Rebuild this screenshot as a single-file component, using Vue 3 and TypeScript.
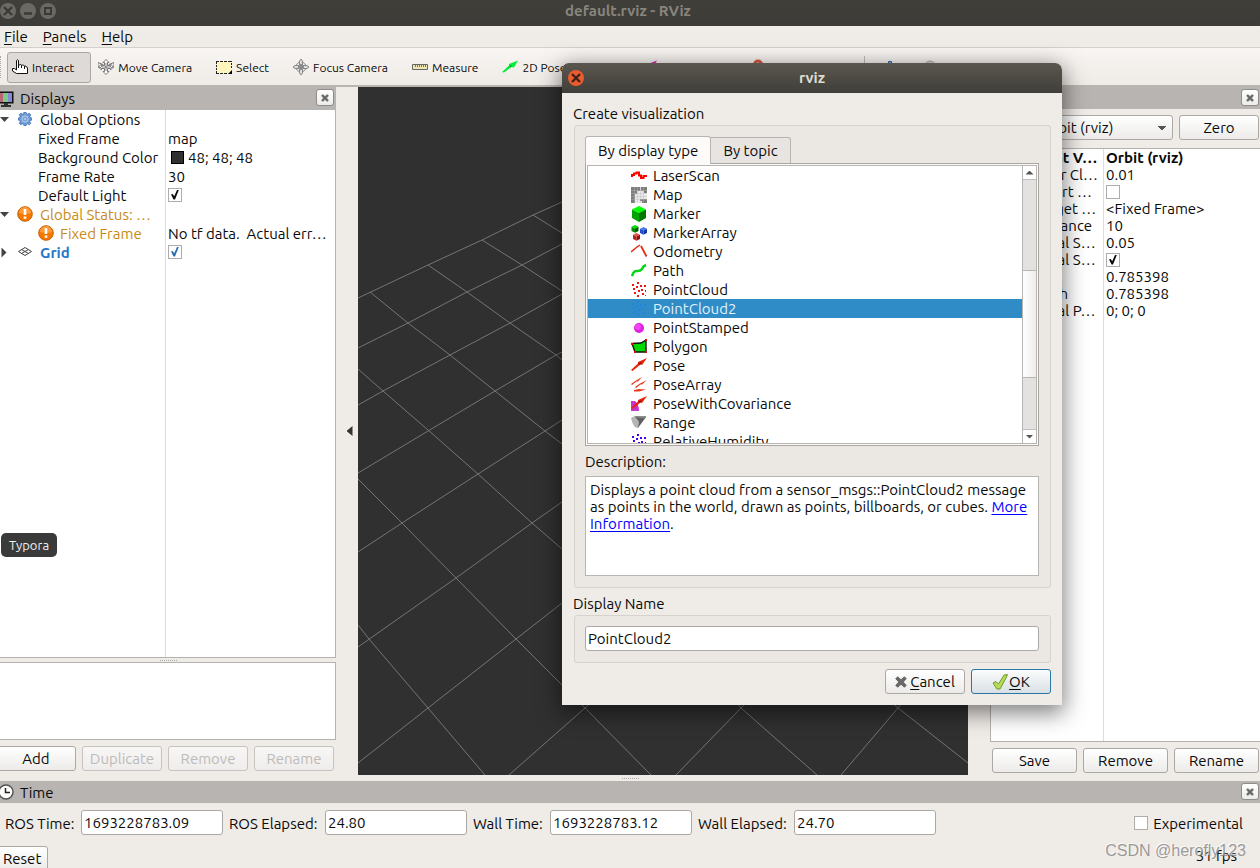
<script setup lang="ts">
import { h, ref } from 'vue'

interface Shape {
  d: string
  fill?: string
  stroke?: string
  w?: number
}

const dots = (color: string): Shape[] => [
  {
    d: 'M6 0h2v2h-2zM1 2h2v2h-2zM9 3h2v2h-2zM13 3h2v2h-2zM5 4h2v2h-2zM2 6h2v2h-2zM10 7h2v2h-2zM7 8h2v2h-2zM14 8h1v2h-1zM3 10h2v2h-2zM11 11h2v2h-2zM6 13h2v2h-2zM14 13h1v1h-1z',
    fill: color,
  },
]

const cube = (x: number, y: number, s: number, top: string, left: string, right: string): Shape[] => [
  { d: `M${x} ${y}l${s} ${s / 2}l${-s} ${s / 2}l${-s} ${-s / 2}z`, fill: top },
  { d: `M${x - s} ${y + s / 2}l${s} ${s / 2}v${s * 1.2}l${-s} ${-s / 2}z`, fill: left },
  { d: `M${x + s} ${y + s / 2}l${-s} ${s / 2}v${s * 1.2}l${s} ${-s / 2}z`, fill: right },
]

const arrow = (body: string, mid: string): Shape[] => [
  { d: 'M0 12L7 5.500L7 4L16 0L11 7L9.500 6.500L1.500 13z', fill: body },
  { d: 'M7 5.500L11 4L9 7z', fill: mid },
]

const icons: Record<string, Shape[]> = {
  hand: [
    {
      d: 'M4.500 10V1.500Q5.500 0 6.500 1.500V7Q7.500 5 8.800 5.500T9.500 7Q10.500 5.500 11.700 6.200T12.500 8Q13 6.500 14 7.200T15.500 9V14.500H4.500L.500 12V9.500H2.500L4.500 11z',
      fill: '#fff', stroke: '#111', w: 1,
    },
    { d: 'M6.500 7V9M9.500 7V9M12.500 8V10', stroke: '#111', w: 1 },
  ],
  move: [
    { d: 'M8 .500L11 3.500H9.500V6.500H12.500V5L15.500 8L12.500 11V9.500H9.500V12.500H11L8 15.500L5 12.500H6.500V9.500H3.500V11L.500 8L3.500 5V6.500H6.500V3.500H5z', fill: '#fff', stroke: '#777', w: 1 },
    { d: 'M0 3.500L5 5.500L3 8.500L0 8zM16 3.500L11 5.500L13 8.500L16 8z', fill: 'none', stroke: '#777', w: 1 },
    { d: 'M4 8H12M8 4V12M6 6L10 10M10 6L6 10', stroke: '#888', w: 1 },
  ],
  select: [
    { d: 'M.500 2.500H15.500V14.500H.500z', fill: '#fff6bd' },
    { d: 'M0 2.500H3M4 2.500H7M8 2.500H11M12 2.500H16M.500 3V5M.500 6V8M.500 9V11M.500 12V15M15.500 4V6M15.500 7V9M0 14.500H3M4 14.500H7M8 14.500H11', stroke: '#222', w: 1 },
    { d: 'M16 11V15H12z', fill: '#000' },
  ],
  focus: [
    { d: 'M8 3A5 5 0 1 0 8 13A5 5 0 1 0 8 3zM8 5.500A2.500 2.500 0 1 0 8 10.500A2.500 2.500 0 1 0 8 5.500z', stroke: '#888', w: 1 },
    { d: 'M8 0L9.500 2V6H6.500V2zM8 16L9.500 14V10H6.500V14zM0 8L2 6.500H6V9.500H2zM16 8L14 6.500H10V9.500H14z', fill: '#ddd', stroke: '#888', w: 1 },
    { d: 'M8 5V11M5 8H11', stroke: '#666', w: 1 },
  ],
  ruler: [
    { d: 'M.500 5.500H15.500V10.500H.500z', fill: '#efe5b5', stroke: '#666', w: 1 },
    { d: 'M3.500 6V8M5.500 6V8M7.500 6V8M9.500 6V8M11.500 6V8M13.500 6V8', stroke: '#777', w: 1 },
  ],
  poseGreen: [{ d: 'M0 13L7 6.500L7 5L16 1.500L12 8.500L9.500 8L2 13.500z', fill: '#00f03a' }, { d: 'M7 7L10 6L9 8.500z', fill: '#00a524' }],
  poseMagenta: [{ d: 'M0 13L7 6.500L7 5L16 1.500L12 8.500L9.500 8L2 13.500z', fill: '#e815d0' }],
  pin: [{ d: 'M8 16Q3 9 3 5.500A5 5 0 0 1 13 5.500Q13 9 8 16zM8 3.500A2 2 0 1 0 8 7.500A2 2 0 1 0 8 3.500z', fill: '#d65541' }],
  plus: [{ d: 'M6.500 2.500H9.500V6.500H13.500V9.500H9.500V13.500H6.500V9.500H2.500V6.500H6.500z', fill: '#86a9d6', stroke: '#3465a4', w: 1 }],
  minus: [{ d: 'M8 2A6 6 0 1 0 8 14A6 6 0 1 0 8 2z', fill: '#d0cecc', stroke: '#aaa', w: 1 }],
  monitor: [
    { d: 'M-1 .500H13.500V12.500H-1z', fill: '#111' },
    { d: 'M0 2H3V11H0z', fill: '#b96575' },
    { d: 'M3 2H8V11H3z', fill: '#79cc86' },
    { d: 'M8 2H12V11H8z', fill: '#8b88dc' },
    { d: 'M4 12H8V14H11V16H1V14H4z', fill: '#333' },
  ],
  clock: [
    { d: 'M6 1A7 7 0 1 0 6 15A7 7 0 1 0 6 1z', fill: '#fff', stroke: '#555', w: 1.5 },
    { d: 'M5.500 4V8.500H10', stroke: '#222', w: 1.5 },
  ],
  gear: [
    { d: 'M7 0H9L9.500 2L11 2.500L13 1.500L14.500 3L13.500 5L14 6.500L16 7V9L14 9.500L13.500 11L14.500 13L13 14.500L11 13.500L9.500 14L9 16H7L6.500 14L5 13.500L3 14.500L1.500 13L2.500 11L2 9.500L0 9V7L2 6.500L2.500 5L1.500 3L3 1.500L5 2.500L6.500 2z', fill: '#6f9cd6', stroke: '#3f72b5', w: 1 },
    { d: 'M8 4.500A3.500 3.500 0 1 0 8 11.500A3.500 3.500 0 1 0 8 4.500zM8 7A1 1 0 1 0 8 9A1 1 0 1 0 8 7z', stroke: '#c4d8ef', w: 1 },
  ],
  warn: [
    { d: 'M8 .700A7.300 7.300 0 1 0 8 15.300A7.300 7.300 0 1 0 8 .700z', fill: '#f57900', stroke: '#c66000', w: 1 },
    { d: 'M2 7A6 6 0 0 1 14 7Q8 9 2 7z', fill: '#fb9b3c' },
    { d: 'M6.700 3H9.300V9H6.700zM6.700 10.500H9.300V12.800H6.700z', fill: '#fff' },
  ],
  grid: [
    { d: 'M8 3.500L14.500 7.500L8 11.500L1.500 7.500zM4.500 5.500L11.500 9.500M11.500 5.500L4.500 9.500', stroke: '#444', w: 1 },
  ],
  laser: [{ d: 'M1 9V7H3V5.500H5.500V4.500H8V7.500H10V10H12.500V8H16', stroke: '#f00', w: 2 }],
  map: [
    { d: 'M0 0H16V16H0z', fill: '#e8e8e8' },
    { d: 'M0 0H9V4H6V7H4V16H0zM12 0H16V6H13V4H10V0zM9 12H16V16H11V14H9z', fill: '#7d7d7d' },
    { d: 'M3.500 0V16M6.500 0V16M9.500 0V16M12.500 0V16M0 3.500H16M0 6.500H16M0 9.500H16M0 12.500H16', stroke: '#bbb', w: 0.4 },
  ],
  marker: [
    { d: 'M8 0L15 3.500L8 7L1 3.500z', fill: '#00ff00' },
    { d: 'M1 3.500L8 7V16L1 12z', fill: '#00a400' },
    { d: 'M15 3.500L8 7V16L15 12z', fill: '#007800' },
  ],
  markerArray: [
    ...cube(4, 0, 3.5, '#00e000', '#009000', '#006000'),
    ...cube(12.5, 2, 3.5, '#4a78f0', '#1f4fd0', '#1238a0'),
    ...cube(5.5, 8, 3.5, '#e85050', '#c42020', '#901010'),
  ],
  odometry: [
    { d: 'M0 8L6 3L9 1', stroke: '#e82a10', w: 1.5 },
    { d: 'M10 2L15.500 12.500', stroke: '#e82a10', w: 1.8 },
  ],
  path: [{ d: 'M1 13C4 4 7 11 11 6Q12 3 15 2', stroke: '#00d816', w: 2.5 }],
  cloudRed: dots('#ee1515'),
  cloudBlue: dots('#1f86e0'),
  cloudPurple: dots('#4b00e8'),
  sphere: [
    { d: 'M8 3A5 5 0 1 0 8 13A5 5 0 1 0 8 3z', fill: '#e01fe0' },
    { d: 'M7 4A3 3 0 1 0 7 10A3 3 0 1 0 7 4z', fill: '#f544f5' },
  ],
  polygon: [
    { d: 'M1 4.500L10 4L15 1V13H4z', fill: '#00d800', stroke: '#111', w: 1.4 },
    { d: 'M0 4H2V6H0zM14 0H16V2H14zM14 12H16V14H14zM3 12H5V14H3z', fill: '#f00' },
  ],
  pose: arrow('#e8230c', '#8c1408'),
  poseArray: [
    { d: 'M0 7L5 3.500L11 0L7 4.500L5.500 4.500L1 8zM4 10L9 6.500L16 3L11 7.500L9.500 7.500L5 11zM3 13L8 12L15 12.500L8 14.500L3 14.500z', fill: '#ee3a1c' },
  ],
  poseCov: [{ d: 'M0 5H4Q8 8 8 15H0z', fill: '#c436cc' }, ...arrow('#e8230c', '#8c1408')],
  range: [
    { d: 'M4 2L15 2L7 13z', fill: '#606060' },
    { d: 'M0 3Q4 0 8 7L7 13Q2 13 0 3z', fill: '#b5b5b5' },
    { d: 'M2 1H15V2.500Q8 4 2 1z', fill: '#8b8b8b' },
  ],
  cross: [{ d: 'M3.500 1L8 5L12.500 1L15 3.500L11 8L15 12.500L12.500 15L8 11L3.500 15L1 12.500L5 8L1 3.500z', fill: '#6a6a68', stroke: '#555553', w: 1 }],
  tick: [{ d: 'M1 9L4 7.500L6.500 10L12 1L15.500 .500L14 4L8 15H5z', fill: '#b4dc55', stroke: '#6f9a2c', w: 1 }],
  winClose: [{ d: 'M4 4L12 12M12 4L4 12', stroke: 'currentColor', w: 2.4 }],
  winMin: [{ d: 'M4 10.500H12', stroke: 'currentColor', w: 2.4 }],
  winMax: [{ d: 'M5 5H11V11H5z', stroke: 'currentColor', w: 2 }],
}

const Icon = (props: { name: string; size?: number }) =>
  h(
    'svg',
    { viewBox: '0 0 16 16', width: props.size ?? 16, height: props.size ?? 16, 'aria-hidden': 'true' },
    icons[props.name].map((s) =>
      h('path', { d: s.d, fill: s.fill ?? 'none', stroke: s.stroke, 'stroke-width': s.w, 'fill-rule': 'evenodd' }),
    ),
  )
Icon.props = ['name', 'size']

const tools = [
  { label: 'Interact', icon: 'hand', active: true },
  { label: 'Move Camera', icon: 'move' },
  { label: 'Select', icon: 'select' },
  { label: 'Focus Camera', icon: 'focus' },
  { label: 'Measure', icon: 'ruler' },
  { label: '2D Pose Estimate', icon: 'poseGreen' },
  { label: '2D Nav Goal', icon: 'poseMagenta' },
  { label: 'Publish Point', icon: 'pin' },
]

interface Row {
  name: string
  level: number
  value?: string
  icon?: string
  tone?: string
  open?: boolean
  check?: boolean
  swatch?: boolean
}

const displays = ref<Row[]>([
  { name: 'Global Options', level: 0, icon: 'gear', open: true },
  { name: 'Fixed Frame', level: 1, value: 'map' },
  { name: 'Background Color', level: 1, value: '48; 48; 48', swatch: true },
  { name: 'Frame Rate', level: 1, value: '30' },
  { name: 'Default Light', level: 1, check: true },
  { name: 'Global Status: …', level: 0, icon: 'warn', open: true, tone: 'amber' },
  { name: 'Fixed Frame', level: 1, icon: 'warn', tone: 'amber', value: 'No tf data.  Actual err…' },
  { name: 'Grid', level: 0, icon: 'grid', open: false, tone: 'blue', check: true },
])

const views = ref<Row[]>([
  { name: 'Current V…', level: 0, value: 'Orbit (rviz)', tone: 'strong' },
  { name: 'Near Cl…', level: 1, value: '0.01' },
  { name: 'Invert …', level: 1, check: false },
  { name: 'Target …', level: 1, value: '<Fixed Frame>' },
  { name: 'Distance', level: 1, value: '10' },
  { name: 'Focal S…', level: 1, value: '0.05' },
  { name: 'Focal S…', level: 1, check: true },
  { name: 'Yaw', level: 1, value: '0.785398' },
  { name: 'Pitch', level: 1, value: '0.785398' },
  { name: 'Focal P…', level: 1, value: '0; 0; 0' },
])

const types = [
  ['LaserScan', 'laser'],
  ['Map', 'map'],
  ['Marker', 'marker'],
  ['MarkerArray', 'markerArray'],
  ['Odometry', 'odometry'],
  ['Path', 'path'],
  ['PointCloud', 'cloudRed'],
  ['PointCloud2', 'cloudBlue'],
  ['PointStamped', 'sphere'],
  ['Polygon', 'polygon'],
  ['Pose', 'pose'],
  ['PoseArray', 'poseArray'],
  ['PoseWithCovariance', 'poseCov'],
  ['Range', 'range'],
  ['RelativeHumidity', 'cloudPurple'],
]
const selected = ref('PointCloud2')
const displayName = ref('PointCloud2')

const times = ref([
  { id: 'ros-time', label: 'ROS Time:', value: '1693228783.09' },
  { id: 'ros-elapsed', label: 'ROS Elapsed:', value: '24.80' },
  { id: 'wall-time', label: 'Wall Time:', value: '1693228783.12' },
  { id: 'wall-elapsed', label: 'Wall Elapsed:', value: '24.70' },
])
const experimental = ref(false)

const gridLines = [
  'M0 211L70 178L124 153L175 128L204 115L330 58',
  'M0 261L50 236L109 205L164 178L204 157L330 95',
  'M0 318L25 304L92 268L152 236L204 207L330 140',
  'M0 386L70 344L137 304L198 268L204 265L330 190',
  'M0 465L44 436L120 387L187 344L204 333L330 250',
  'M0 560L98 491L174 436L204 415L330 320',
  'M0 676L70 621L158 552L204 516L330 420',
  'M151 688L227 621L330 530',
  'M318 688L383 621L430 570',
  'M483 688L540 621L590 560',
  'M175 128L204 146L300 205',
  'M124 153L164 178L204 204L300 265',
  'M70 178L109 205L152 236L198 268L204 273L300 340',
  'M12 205L50 236L92 268L137 304L187 344L204 357L300 430',
  'M0 282L25 304L70 343L120 387L174 436L204 462L300 550',
  'M0 392L44 436L98 491L158 552L204 598L227 621L293 688',
  'M0 538L11 552L70 621L127 688',
  'M320 552L383 621L459 688',
  'M460 552L540 621L610 676',
]
</script>

<template>
  <div class="window">
    <header class="titlebar">
      <div class="win-buttons">
        <button type="button" aria-label="Close"><Icon name="winClose" /></button>
        <button type="button" aria-label="Minimize"><Icon name="winMin" /></button>
        <button type="button" aria-label="Maximize"><Icon name="winMax" /></button>
      </div>
      <h1>default.rviz - RViz</h1>
    </header>

    <nav class="menubar">
      <button type="button"><u>F</u>ile</button>
      <button type="button"><u>P</u>anels</button>
      <button type="button"><u>H</u>elp</button>
    </nav>

    <div class="toolbar">
      <span class="handle"></span>
      <button v-for="t in tools" :key="t.label" type="button" class="tool" :class="{ active: t.active }">
        <Icon :name="t.icon" /><span>{{ t.label }}</span>
      </button>
      <span class="tool-sep"></span>
      <button type="button" class="tool" aria-label="Add tool"><Icon name="plus" /></button>
      <button type="button" class="tool" aria-label="Remove tool"><Icon name="minus" /></button>
    </div>

    <main class="workspace">
      <section class="dock left-dock">
        <div class="dock-title">
          <Icon name="monitor" />
          <h2>Displays</h2>
          <button type="button" class="dock-close" aria-label="Close Displays"><Icon name="cross" :size="8" /></button>
        </div>
        <div class="tree displays-tree">
          <div v-for="(r, i) in displays" :key="i" class="row" :class="[r.tone, 'level-' + r.level]">
            <div class="name">
              <span v-if="r.level === 0" class="arrow" :class="{ open: r.open }"></span>
              <span v-if="r.icon" class="row-icon"><Icon :name="r.icon" :size="r.icon === 'gear' ? 14 : 16" /></span>
              <span>{{ r.name }}</span>
            </div>
            <div class="value">
              <i v-if="r.swatch" class="swatch"></i>
              <input v-if="r.check !== undefined" v-model="r.check" type="checkbox" :aria-label="r.name" />
              <span v-else>{{ r.value }}</span>
            </div>
          </div>
        </div>
        <div class="splitter"><span></span></div>
        <div class="help-box"></div>
        <div class="buttons left-buttons">
          <button type="button" class="btn">Add</button>
          <button type="button" class="btn" disabled>Duplicate</button>
          <button type="button" class="btn" disabled>Remove</button>
          <button type="button" class="btn" disabled>Rename</button>
        </div>
      </section>

      <div class="collapse"><span></span></div>

      <section class="viewport">
        <svg viewBox="0 0 610 688" preserveAspectRatio="xMinYMin slice" aria-label="3D view">
          <path v-for="d in gridLines" :key="d" :d="d" />
        </svg>
      </section>

      <div class="collapse plain"></div>

      <section class="dock right-dock">
        <div class="dock-title">
          <h2>Views</h2>
          <button type="button" class="dock-close" aria-label="Close Views"><Icon name="cross" :size="8" /></button>
        </div>
        <div class="view-type">
          <label for="view-type">Type:</label>
          <select id="view-type">
            <option>Orbit (rviz)</option>
          </select>
          <button type="button" class="btn">Zero</button>
        </div>
        <div class="tree views-tree">
          <div v-for="(r, i) in views" :key="i" class="row" :class="[r.tone, 'level-' + r.level]">
            <div class="name"><span>{{ r.name }}</span></div>
            <div class="value">
              <input v-if="r.check !== undefined" v-model="r.check" type="checkbox" :aria-label="r.name" />
              <span v-else>{{ r.value }}</span>
            </div>
          </div>
        </div>
        <div class="buttons right-buttons">
          <button type="button" class="btn">Save</button>
          <button type="button" class="btn">Remove</button>
          <button type="button" class="btn">Rename</button>
        </div>
      </section>
    </main>

    <div class="splitter wide"><span></span></div>

    <section class="time-dock">
      <div class="dock-title">
        <Icon name="clock" />
        <h2>Time</h2>
        <button type="button" class="dock-close" aria-label="Close Time"><Icon name="cross" :size="8" /></button>
      </div>
      <div class="time-row">
        <div class="time-fields">
          <template v-for="t in times" :key="t.id">
            <label :for="t.id">{{ t.label }}</label>
            <input :id="t.id" v-model="t.value" class="field" type="text" />
          </template>
        </div>
        <label class="experimental"><input v-model="experimental" type="checkbox" />Experimental</label>
      </div>
    </section>

    <footer class="status">
      <button type="button" class="btn">Reset</button>
      <span class="fps">31 fps</span>
    </footer>

    <div class="tooltip">Typora</div>
    <div class="watermark">CSDN @herofly123</div>

    <div class="dialog" role="dialog" aria-labelledby="dialog-title">
      <div class="dialog-title">
        <button type="button" aria-label="Close dialog"><Icon name="winClose" /></button>
        <h2 id="dialog-title">rviz</h2>
      </div>
      <div class="dialog-body">
        <h3>Create visualization</h3>
        <div class="group">
          <div class="tabs" role="tablist">
            <button type="button" role="tab" class="tab current" aria-selected="true">By display type</button>
            <button type="button" role="tab" class="tab" aria-selected="false">By topic</button>
          </div>
          <div class="pane">
            <ul class="types" role="listbox" aria-label="Display types">
              <li
                v-for="[name, icon] in types"
                :key="name"
                role="option"
                :aria-selected="name === selected"
                :class="{ selected: name === selected }"
                @click="selected = displayName = name"
              >
                <Icon :name="icon" /><span>{{ name }}</span>
              </li>
            </ul>
            <div class="scrollbar">
              <button type="button" aria-label="Scroll up"><span class="up"></span></button>
              <div class="track"><div class="thumb"></div></div>
              <button type="button" aria-label="Scroll down"><span class="down"></span></button>
            </div>
          </div>
          <h4>Description:</h4>
          <p class="description">
            Displays a point cloud from a sensor_msgs::PointCloud2 message as points in the world, drawn as points,
            billboards, or cubes. <a href="#">More Information</a>.
          </p>
        </div>
        <label class="name-label" for="display-name">Display Name</label>
        <div class="group">
          <input id="display-name" v-model="displayName" class="field" type="text" />
        </div>
        <div class="dialog-buttons">
          <button type="button" class="btn"><Icon name="cross" :size="12" /><span><u>C</u>ancel</span></button>
          <button type="button" class="btn ok"><Icon name="tick" /><span><u>O</u>K</span></button>
        </div>
      </div>
    </div>
  </div>
</template>

<style>
body {
  margin: 0;
}
</style>

<style scoped>
.window {
  position: relative;
  display: flex;
  flex-direction: column;
  height: 100vh;
  overflow: hidden;
  background: #efebe7;
  color: #0a0a0a;
  font: 15px/19px Ubuntu, 'Noto Sans', sans-serif;
}
.window * {
  box-sizing: border-box;
}
button,
input,
select {
  font: inherit;
  color: inherit;
}
button {
  padding: 0;
  border: 0;
  background: none;
}
h1,
h2,
h3,
h4,
p,
ul {
  margin: 0;
  padding: 0;
  font: inherit;
}
svg {
  display: block;
  flex: none;
}
u {
  text-underline-offset: 2px;
}

.titlebar {
  display: flex;
  flex: none;
  align-items: center;
  height: 26px;
  padding-bottom: 5px;
  background: linear-gradient(#403f3a, #3c3b37);
  color: #88857d;
}
.titlebar h1 {
  flex: 1;
  padding-right: 60px;
  text-align: center;
  font-weight: 700;
}
.win-buttons {
  display: flex;
  gap: 4px;
  width: 56px;
}
.win-buttons button {
  display: grid;
  place-items: center;
  width: 16px;
  height: 16px;
  border-radius: 50%;
  background: #6b6963;
  color: #3a3935;
}

.menubar {
  display: flex;
  flex: none;
  gap: 15px;
  height: 22px;
  padding: 0 4px;
  border-bottom: 1px solid #d3cfcb;
}

.toolbar {
  display: flex;
  flex: none;
  align-items: center;
  gap: 2px;
  height: 39px;
  padding-top: 1px;
  overflow: hidden;
  border-bottom: 2px solid #b8b4b0;
  background: linear-gradient(#f8f5f2, #efebe7);
  font-size: 12px;
  white-space: nowrap;
}
.handle {
  width: 3px;
  height: 22px;
  margin: 0 2px 0 0;
  border-left: 1px dotted #aaa;
}
.tool {
  display: flex;
  flex: none;
  align-items: center;
  gap: 4px;
  height: 31px;
  padding: 0 16px 0 4px;
  border: 1px solid transparent;
  border-radius: 3px;
}
.tool.active {
  border-color: #aaa6a2;
  background: #dedad7;
}
.tool-sep {
  width: 1px;
  height: 22px;
  margin: 0 10px 0 4px;
  background: #bbb;
}

.workspace {
  display: flex;
  flex: 1;
  min-height: 0;
}
.dock {
  display: flex;
  flex-direction: column;
  flex: none;
}
.left-dock {
  width: 336px;
}
.right-dock {
  width: 270px;
}
.dock-title {
  display: flex;
  flex: none;
  align-items: center;
  gap: 4px;
  height: 23px;
  padding-right: 2px;
  background: #b8b4b1;
}
.dock-title h2 {
  flex: 1;
}
.dock-close {
  display: grid;
  place-items: center;
  align-self: flex-start;
  width: 18px;
  height: 17px;
  margin-top: 2px;
  border: 1px solid #8f8c89;
  border-radius: 3px;
  background: linear-gradient(#fff, #ececea);
}
.right-dock .dock-title,
.time-dock .dock-title {
  height: 22px;
  padding-right: 1px;
}

.tree {
  flex: 1;
  min-height: 0;
  border: 1px solid #b5b1ad;
  white-space: pre;
}
.displays-tree {
  border-width: 0 1px 1px 0;
  background: linear-gradient(#dcdcdc, #dcdcdc) 165px 0 / 1px 100% no-repeat #fff;
}
.views-tree {
  margin-top: 8px;
  border-right: 0;
  background: linear-gradient(#dcdcdc, #dcdcdc) 112px 0 / 1px 100% no-repeat #fff;
}
.row {
  display: grid;
  grid-template-columns: 165px 1fr;
  align-items: center;
  height: 19px;
}
.views-tree .row {
  grid-template-columns: 112px 1fr;
  height: 17px;
  line-height: 17px;
}
.name,
.value {
  display: flex;
  align-items: center;
}
.value {
  padding-left: 3px;
}
.name {
  gap: 7px;
}
.row-icon {
  display: grid;
  justify-items: center;
  padding-bottom: 2px;
}
.level-0 .row-icon {
  width: 16px;
}
.level-1 .name {
  padding-left: 38px;
}
.level-1 .row-icon {
  width: 15px;
}
.views-tree .level-0 .name {
  padding-left: 24px;
}
.views-tree .level-1 .name {
  padding-left: 43px;
}
.arrow {
  width: 10px;
  height: 10px;
  background: #444;
  clip-path: polygon(15% 0, 65% 50%, 15% 100%);
}
.arrow.open {
  clip-path: polygon(0 25%, 90% 25%, 45% 75%);
}
.amber .name {
  color: #c98a13;
}
.blue .name {
  color: #2a78c8;
  font-weight: 700;
}
.blue .value {
  color: #2a6db0;
}
.strong {
  font-weight: 700;
}
.swatch {
  width: 13px;
  height: 13px;
  margin: 0 4px 0 3px;
  border: 1px solid #000;
  background: #303030;
}

input[type='checkbox'] {
  display: grid;
  place-items: center;
  width: 14px;
  height: 14px;
  margin: 0;
  border: 1px solid #b0acaa;
  background: #fff;
  appearance: none;
}
.displays-tree input[type='checkbox'] {
  margin-bottom: 2px;
}
input[type='checkbox']:checked::before {
  width: 8px;
  height: 10px;
  background: currentColor;
  clip-path: polygon(0 50%, 22% 45%, 40% 68%, 78% 0, 100% 0, 50% 100%, 32% 100%);
  content: '';
}

.splitter {
  display: grid;
  flex: none;
  place-items: center;
  height: 4px;
}
.splitter span {
  width: 17px;
  border-top: 1px dotted #aaa;
}
.splitter.wide {
  height: 6px;
}
.help-box {
  flex: none;
  height: 78px;
  border: 1px solid #b5b1ad;
  border-left: 0;
  background: #fff;
}
.buttons {
  display: grid;
  flex: none;
  gap: 6px;
}
.left-buttons {
  grid-template-columns: repeat(4, 1fr);
  margin-left: -4px;
  padding: 6px 2px 4px 0;
}
.right-buttons {
  grid-template-columns: repeat(3, 1fr);
  padding: 6px 1px 2px 2px;
}
.btn {
  display: flex;
  align-items: center;
  justify-content: center;
  height: 25px;
  border: 1px solid #aca8a4;
  border-radius: 3px;
  background: linear-gradient(#fff, #ecebe9);
}
.btn:disabled {
  border-color: #c6c3c0;
  background: linear-gradient(#f8f7f6, #efedeb);
  color: #bdbbb9;
}

.collapse {
  display: grid;
  flex: none;
  place-items: center;
  width: 22px;
}
.collapse span {
  width: 6px;
  height: 10px;
  margin-left: 5px;
  background: #333;
  clip-path: polygon(100% 0, 0 50%, 100% 100%);
}
.viewport {
  flex: 1;
  min-width: 0;
  overflow: hidden;
  background: #303030;
}
.viewport svg {
  width: 100%;
  height: 100%;
}
.viewport path {
  fill: none;
  stroke: #757575;
  stroke-width: 1;
}

.view-type {
  display: grid;
  flex: none;
  grid-template-columns: 34px 1fr 80px;
  align-items: center;
  gap: 6px;
  padding: 6px 1px 0 3px;
}
.view-type select {
  height: 25px;
  padding: 0 16px 0 7px;
  border: 1px solid #aca8a4;
  border-radius: 3px;
  background:
    conic-gradient(from -45deg at 50% 100%, #555 90deg, transparent 0) calc(100% - 6px) 50% / 8px 4px no-repeat,
    linear-gradient(#fff, #ecebe9);
  appearance: none;
}

.time-dock {
  flex: none;
}
.time-row {
  display: flex;
  align-items: center;
  justify-content: space-between;
  padding: 7px 17px 0 5px;
}
.time-fields {
  display: grid;
  grid-template-columns: 70px 142px 90px 142px 71px 142px 90px 142px;
  align-items: center;
  gap: 6px;
  white-space: nowrap;
}
.time-row label {
  padding-top: 1px;
}
.field {
  display: block;
  width: 100%;
  height: 25px;
  padding: 0 2px;
  border: 1px solid #aca8a4;
  border-radius: 3px;
  background: #fff;
  outline: 0;
}
.experimental {
  display: flex;
  align-items: center;
  gap: 5px;
}
.status {
  display: flex;
  flex: none;
  align-items: flex-start;
  justify-content: space-between;
  height: 33px;
  padding-top: 11px;
}
.status .btn {
  margin-left: -4px;
  padding: 0 6px;
}
.fps {
  padding-right: 23px;
}

.tooltip {
  position: absolute;
  top: 533px;
  left: 1px;
  padding: 3px 8px 2px;
  border-radius: 5px;
  background: #3a3a3a;
  color: #f0f0f0;
  font-size: 13px;
}
.watermark {
  position: absolute;
  right: 14px;
  bottom: 8px;
  color: rgba(130, 130, 130, 0.8);
  font: 16px/19px 'Liberation Sans', Arial, sans-serif;
  text-shadow: -1px -1px 0 rgba(255, 255, 255, 0.7);
}

.dialog {
  position: absolute;
  top: 63px;
  left: 562px;
  width: 500px;
  border-radius: 7px 7px 0 0;
  background: #efebe7;
  box-shadow: 0 6px 22px 2px rgba(0, 0, 0, 0.5);
}
.dialog-title {
  display: flex;
  align-items: center;
  height: 30px;
  padding: 0 6px 1px;
  border-radius: 7px 7px 0 0;
  background: linear-gradient(#5a574f, #403e39);
  color: #dfdbd2;
}
.dialog-title button {
  display: grid;
  place-items: center;
  width: 16px;
  height: 16px;
  border-radius: 50%;
  background: #ea5b2e;
  color: #3c2418;
}
.dialog-title h2 {
  flex: 1;
  padding-right: 16px;
  text-align: center;
  font-weight: 700;
}
.dialog-body {
  padding: 11px 11px 11px 12px;
}
.dialog-body h3,
.name-label {
  display: block;
  margin: 0 0 2px -1px;
}
.group {
  padding: 10px 11px 11px 10px;
  border: 1px solid #d6d2ce;
  border-radius: 3px;
  background: #ebe7e3;
}
.tabs {
  display: flex;
  align-items: flex-end;
}
.tab {
  height: 26px;
  padding: 0 12px;
  border: 1px solid #b8b4b0;
  border-left: 0;
  border-bottom: 0;
  border-radius: 0 3px 0 0;
  background: #e8e4e1;
}
.tab.current {
  height: 28px;
  margin-bottom: -1px;
  border-left: 1px solid #b8b4b0;
  border-radius: 3px 3px 0 0;
  background: #fcfbfa;
}
.pane {
  display: flex;
  height: 283px;
  padding: 1px;
  border: 1px solid #a9a5a1;
  background: linear-gradient(#b8b4b0, #b8b4b0) 1px 1px / calc(100% - 2px) calc(100% - 2px) no-repeat #fcfbfa;
}
.types {
  flex: 1;
  margin: 1px 0 1px 1px;
  overflow: hidden;
  background: #fff;
  list-style: none;
}
.types li {
  display: flex;
  align-items: center;
  gap: 6px;
  height: 19px;
  padding-left: 43px;
}
.types .selected {
  background: #308cc6;
  color: #e2f1fa;
}
.scrollbar {
  display: flex;
  flex-direction: column;
  width: 15px;
  border: 1px solid #b8b4b0;
  background: #fff;
}
.scrollbar button {
  display: grid;
  place-items: center;
  height: 13px;
}
.up,
.down {
  width: 8px;
  height: 4px;
  background: #555;
  clip-path: polygon(50% 0, 100% 100%, 0 100%);
}
.down {
  clip-path: polygon(0 0, 100% 0, 50% 100%);
}
.track {
  flex: 1;
  padding-top: 90px;
  border: solid #c2bebb;
  border-width: 1px 0;
  background: #e3e2e0;
}
.thumb {
  height: 108px;
  border: solid #b8b4b0;
  border-width: 1px 0;
  background: linear-gradient(90deg, #fff, #efedeb);
}
.group h4 {
  padding: 6px 0 5px;
}
.description {
  height: 100px;
  padding: 4px;
  border: 1px solid #b8b4b0;
  background: #fff;
  line-height: 17px;
}
.description a {
  color: #00f;
  text-underline-offset: 2px;
}
.name-label {
  margin-top: 6px;
}
.dialog-buttons {
  display: grid;
  grid-template-columns: 80px 80px;
  justify-content: end;
  gap: 6px;
  padding-top: 6px;
}
.dialog-buttons .btn {
  gap: 3px;
}
.dialog-buttons .btn.ok {
  gap: 1px;
  border-color: #2b76a8;
  background: linear-gradient(#fbfcfc, #d9e0e4);
}
</style>
